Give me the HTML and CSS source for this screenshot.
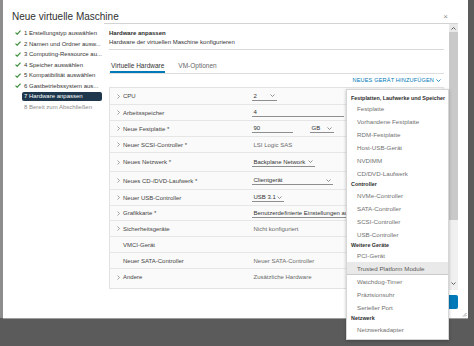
FILE: index.html
```html
<!DOCTYPE html>
<html lang="de">
<head>
<meta charset="utf-8">
<title>Neue virtuelle Maschine</title>
<link rel="stylesheet" href="styles.css">
</head>
<body>
<div class="modal">
  <header class="modal-header">
    <h1 class="title">Neue virtuelle Maschine</h1>
    <span class="close">×</span>
  </header>
  <div class="modal-main">
    <nav class="steps">
      <div class="step"><svg class="check" viewBox="0 0 6 5"><polyline points="0.5,2.6 2.2,4.2 5.5,0.7"/></svg><span>1 Erstellungstyp auswählen</span></div>
      <div class="step"><svg class="check" viewBox="0 0 6 5"><polyline points="0.5,2.6 2.2,4.2 5.5,0.7"/></svg><span>2 Namen und Ordner ausw...</span></div>
      <div class="step"><svg class="check" viewBox="0 0 6 5"><polyline points="0.5,2.6 2.2,4.2 5.5,0.7"/></svg><span>3 Computing-Ressource au...</span></div>
      <div class="step"><svg class="check" viewBox="0 0 6 5"><polyline points="0.5,2.6 2.2,4.2 5.5,0.7"/></svg><span>4 Speicher auswählen</span></div>
      <div class="step"><svg class="check" viewBox="0 0 6 5"><polyline points="0.5,2.6 2.2,4.2 5.5,0.7"/></svg><span>5 Kompatibilität auswählen</span></div>
      <div class="step"><svg class="check" viewBox="0 0 6 5"><polyline points="0.5,2.6 2.2,4.2 5.5,0.7"/></svg><span>6 Gastbetriebssystem aus...</span></div>
      <div class="step active"><span class="active-label">7 Hardware anpassen</span></div>
      <div class="step todo"><span>8 Bereit zum Abschließen</span></div>
    </nav>
    <section class="pane">
      <div class="pane-content">
        <div class="page-head">
          <div class="page-title">Hardware anpassen</div>
          <div class="page-sub">Hardware der virtuellen Maschine konfigurieren</div>
        </div>
        <div class="tabs">
          <span class="tab active">Virtuelle Hardware</span>
          <span class="tab">VM-Optionen</span>
        </div>
        <div class="actions">
          <span class="add-link">NEUES GERÄT HINZUFÜGEN <svg class="chev-down blue" viewBox="0 0 5 3"><polyline points="0.5,0.5 2.5,2.5 4.5,0.5"/></svg></span>
        </div>
        <div class="hw-table">
          <div class="row h17">
            <div class="label"><svg class="chev" viewBox="0 0 3 5"><polyline points="0.5,0.5 2.5,2.5 0.5,4.5"/></svg>CPU</div>
            <div class="value"><span class="select w-cpu">2<svg class="chev-down" viewBox="0 0 5 3"><polyline points="0.5,0.5 2.5,2.5 4.5,0.5"/></svg></span></div>
          </div>
          <div class="row h16">
            <div class="label"><svg class="chev" viewBox="0 0 3 5"><polyline points="0.5,0.5 2.5,2.5 0.5,4.5"/></svg>Arbeitsspeicher</div>
            <div class="value"><span class="select w-mem">4</span></div>
          </div>
          <div class="row h16">
            <div class="label"><svg class="chev" viewBox="0 0 3 5"><polyline points="0.5,0.5 2.5,2.5 0.5,4.5"/></svg>Neue Festplatte *</div>
            <div class="value"><span class="select w-disk">90</span><span class="select w-unit">GB<svg class="chev-down" viewBox="0 0 5 3"><polyline points="0.5,0.5 2.5,2.5 4.5,0.5"/></svg></span></div>
          </div>
          <div class="row h16">
            <div class="label"><svg class="chev" viewBox="0 0 3 5"><polyline points="0.5,0.5 2.5,2.5 0.5,4.5"/></svg>Neuer SCSI-Controller *</div>
            <div class="value"><span class="static">LSI Logic SAS</span></div>
          </div>
          <div class="row h19">
            <div class="label"><svg class="chev" viewBox="0 0 3 5"><polyline points="0.5,0.5 2.5,2.5 0.5,4.5"/></svg>Neues Netzwerk *</div>
            <div class="value"><span class="select w-net">Backplane Network<svg class="chev-down" viewBox="0 0 5 3"><polyline points="0.5,0.5 2.5,2.5 4.5,0.5"/></svg></span></div>
          </div>
          <div class="row h18">
            <div class="label"><svg class="chev" viewBox="0 0 3 5"><polyline points="0.5,0.5 2.5,2.5 0.5,4.5"/></svg>Neues CD-/DVD-Laufwerk *</div>
            <div class="value"><span class="select w-cd">Clientgerät<svg class="chev-down" viewBox="0 0 5 3"><polyline points="0.5,0.5 2.5,2.5 4.5,0.5"/></svg></span></div>
          </div>
          <div class="row h16">
            <div class="label"><svg class="chev" viewBox="0 0 3 5"><polyline points="0.5,0.5 2.5,2.5 0.5,4.5"/></svg>Neuer USB-Controller</div>
            <div class="value"><span class="select w-usb">USB 3.1<svg class="chev-down" viewBox="0 0 5 3"><polyline points="0.5,0.5 2.5,2.5 4.5,0.5"/></svg></span></div>
          </div>
          <div class="row h15">
            <div class="label"><svg class="chev" viewBox="0 0 3 5"><polyline points="0.5,0.5 2.5,2.5 0.5,4.5"/></svg>Grafikkarte *</div>
            <div class="value"><span class="select w-gpu">Benutzerdefinierte Einstellungen angeben</span></div>
          </div>
          <div class="row h16">
            <div class="label"><svg class="chev" viewBox="0 0 3 5"><polyline points="0.5,0.5 2.5,2.5 0.5,4.5"/></svg>Sicherheitsgeräte</div>
            <div class="value"><span class="static">Nicht konfiguriert</span></div>
          </div>
          <div class="row h16">
            <div class="label nochev">VMCI-Gerät</div>
            <div class="value"></div>
          </div>
          <div class="row h16">
            <div class="label nochev">Neuer SATA-Controller</div>
            <div class="value"><span class="static">Neuer SATA-Controller</span></div>
          </div>
          <div class="row h16 last">
            <div class="label"><svg class="chev" viewBox="0 0 3 5"><polyline points="0.5,0.5 2.5,2.5 0.5,4.5"/></svg>Andere</div>
            <div class="value"><span class="static">Zusätzliche Hardware</span></div>
          </div>
        </div>
      </div>
      <div class="scrollbar">
        <div class="sb-btn sb-up"><svg viewBox="0 0 5 3"><polyline points="0.5,2.5 2.5,0.5 4.5,2.5"/></svg></div>
        <div class="sb-thumb"></div>
        <div class="sb-track"></div>
        <div class="sb-btn sb-down"><svg viewBox="0 0 5 3"><polyline points="0.5,0.5 2.5,2.5 4.5,0.5"/></svg></div>
      </div>
    </section>
    <div class="gutter"></div>
  </div>
  <footer class="modal-footer">
    <span class="btn-primary" aria-label="Weiter"></span>
    <svg class="grip" viewBox="0 0 5 5"><line x1="1" y1="4.5" x2="4.5" y2="1"/><line x1="3" y1="4.5" x2="4.5" y2="3"/></svg>
  </footer>

  <div class="menu">
    <div class="menu-head">Festplatten, Laufwerke und Speicher</div>
    <div class="menu-item">Festplatte</div>
    <div class="menu-item">Vorhandene Festplatte</div>
    <div class="menu-item">RDM-Festplatte</div>
    <div class="menu-item">Host-USB-Gerät</div>
    <div class="menu-item">NVDIMM</div>
    <div class="menu-item">CD/DVD-Laufwerk</div>
    <div class="menu-head">Controller</div>
    <div class="menu-item">NVMe-Controller</div>
    <div class="menu-item">SATA-Controller</div>
    <div class="menu-item">SCSI-Controller</div>
    <div class="menu-item">USB-Controller</div>
    <div class="menu-head">Weitere Geräte</div>
    <div class="menu-item">PCI-Gerät</div>
    <div class="menu-item hover">Trusted Platform Module</div>
    <div class="menu-item">Watchdog-Timer</div>
    <div class="menu-item">Präzisionsuhr</div>
    <div class="menu-item">Serieller Port</div>
    <div class="menu-head">Netzwerk</div>
    <div class="menu-item">Netzwerkadapter</div>
  </div>
</div>
</body>
</html>
```

FILE: styles.css
```css
* {
  box-sizing: border-box;
  margin: 0;
  padding: 0;
}

html,
body {
  width: 474px;
  height: 346px;
  overflow: hidden;
}

body {
  background: #5b5b5b;
  font-family: "Liberation Sans", Arial, sans-serif;
  font-size: 6px;
  color: #333;
}

.modal {
  position: relative;
  margin-left: 3px;
  width: 465px;
  height: 318px;
  background: #fff;
  display: grid;
  grid-template-rows: 23px 267px 28px;
  box-shadow: -3px 0 0 #8d8d8d, 0 1px 0 #9c9c9c;
}

/* header */
.modal-header {
  display: flex;
  justify-content: space-between;
  align-items: flex-start;
  padding: 11px 0 0 9px;
}

.title {
  font-size: 10px;
  font-weight: normal;
  line-height: 12px;
  color: #313131;
}

.close {
  font-size: 8px;
  line-height: 8px;
  color: #8f8f8f;
  margin: 2px 20px 0 0;
}

/* main */
.modal-main {
  display: grid;
  grid-template-columns: 101px 354px 10px;
  min-height: 0;
}

.steps {
  padding-top: 4.7px;
}

.step {
  display: flex;
  align-items: center;
  height: 10.6px;
  padding-left: 12px;
  white-space: nowrap;
  color: #333;
}

.check {
  width: 6px;
  height: 5px;
  margin-right: 3px;
  fill: none;
  stroke: #3b8f3b;
  stroke-width: 1.2;
}

.step.active {
  padding-left: 19px;
}

.active-label {
  display: block;
  width: 80px;
  height: 9.5px;
  line-height: 9.5px;
  padding-left: 2px;
  background: #1e374d;
  color: #fff;
  border-radius: 2px;
}

.step.todo {
  padding-left: 21px;
  color: #8a8a8a;
}

/* pane */
.pane {
  border-top: 1px solid #d3d3d3;
  display: grid;
  grid-template-columns: 345px 9px;
  min-height: 0;
  overflow: hidden;
}

.pane-content {
  padding: 0 5px;
}

.page-head {
  padding: 5px 0 2px;
  border-bottom: 1px solid #d9d9d9;
}

.page-title {
  font-weight: bold;
  line-height: 9px;
  color: #2b2b2b;
}

.page-sub {
  line-height: 9px;
  color: #333;
}

.tabs {
  display: flex;
  gap: 12px;
  padding: 10.5px 0 0 1px;
  border-bottom: 1px solid #dedede;
}

.tab {
  font-size: 6.5px;
  line-height: 9px;
  padding: 0 1px 1px;
  border-bottom: 2px solid transparent;
  color: #666;
}

.tab.active {
  color: #333;
  border-bottom-color: #0079b8;
}

.actions {
  display: flex;
  justify-content: flex-end;
  height: 13.5px;
  padding: 2.5px 3px 0 0;
}

.add-link {
  display: flex;
  align-items: center;
  gap: 2px;
  height: 8px;
  font-size: 5.6px;
  letter-spacing: 0.15px;
  color: #0079b8;
  white-space: nowrap;
}

.chev-down {
  width: 5px;
  height: 3px;
  fill: none;
  stroke: #777;
  stroke-width: 0.8;
}

.chev-down.blue {
  stroke: #0079b8;
}

/* hardware table */
.hw-table {
  border: 1px solid #e2e2e2;
  background: #fafafa;
  padding-bottom: 3px;
}

.row {
  display: flex;
  align-items: center;
  border-bottom: 1px solid #e6e6e6;
  white-space: nowrap;
}

.row.last {
  border-bottom: none;
}

.h15 { height: 15px; }
.h16 { height: 16px; }
.h17 { height: 17px; }
.h18 { height: 18px; }
.h19 { height: 19px; }

.label {
  display: flex;
  align-items: center;
  width: 142px;
  flex: none;
  padding-left: 7px;
  color: #444;
}

.label.nochev {
  padding-left: 13px;
}

.chev {
  width: 3px;
  height: 5px;
  margin-right: 3px;
  fill: none;
  stroke: #888;
  stroke-width: 0.8;
}

.value {
  display: flex;
  align-items: center;
}

.select {
  display: inline-flex;
  align-items: center;
  justify-content: space-between;
  flex: none;
  line-height: 8px;
  padding: 0 2px 0 1.5px;
  border-bottom: 1px solid #8e8e8e;
  color: #333;
}

.w-cpu { width: 25px; }
.w-mem { width: 92px; }
.w-disk { width: 41px; }
.w-unit { width: 24px; margin-left: 17px; }
.w-net { width: 63px; }
.w-cd { width: 81px; }
.w-usb { width: 32px; }
.w-gpu { width: 125px; }

.static {
  padding-left: 1.5px;
  color: #6a6a6a;
}

/* scrollbar */
.scrollbar {
  display: flex;
  flex-direction: column;
  background: #f0f0f0;
}

.sb-btn {
  display: flex;
  align-items: center;
  justify-content: center;
}

.sb-btn svg {
  width: 5px;
  height: 3px;
  fill: none;
  stroke: #505050;
  stroke-width: 0.9;
}

.sb-up {
  height: 8px;
  background: #e8e8e8;
}

.sb-thumb {
  height: 188px;
  background: #c9c9c9;
}

.sb-track {
  flex: 1;
}

.sb-down {
  height: 14px;
}

/* footer */
.modal-footer {
  position: relative;
  display: flex;
  justify-content: flex-end;
  align-items: flex-start;
  padding: 5px 10px 0 0;
}

.btn-primary {
  width: 40px;
  height: 14px;
  background: #0079b8;
  border-radius: 2px;
}

.grip {
  position: absolute;
  right: 1px;
  bottom: 1px;
  width: 5px;
  height: 5px;
  stroke: #777;
  stroke-width: 0.7;
}

/* dropdown menu */
.menu {
  position: absolute;
  left: 343px;
  top: 89px;
  width: 103px;
  height: 251px;
  padding: 3.5px 0 5px;
  background: #fff;
  border: 1px solid #d6d6d6;
  box-shadow: 0 1px 3px rgba(0, 0, 0, 0.25);
  white-space: nowrap;
  overflow: hidden;
}

.menu-head {
  height: 8.5px;
  line-height: 8.5px;
  padding-left: 4px;
  font-size: 5.4px;
  font-weight: bold;
  color: #2e2e2e;
}

.menu-item {
  height: 13px;
  line-height: 13px;
  padding-left: 10px;
  font-size: 6.2px;
  color: #727272;
}

.menu-item.hover {
  background: #e9e9e9;
  box-shadow: inset 0 -1px 0 #cacaca;
  color: #5a5a5a;
}
```
